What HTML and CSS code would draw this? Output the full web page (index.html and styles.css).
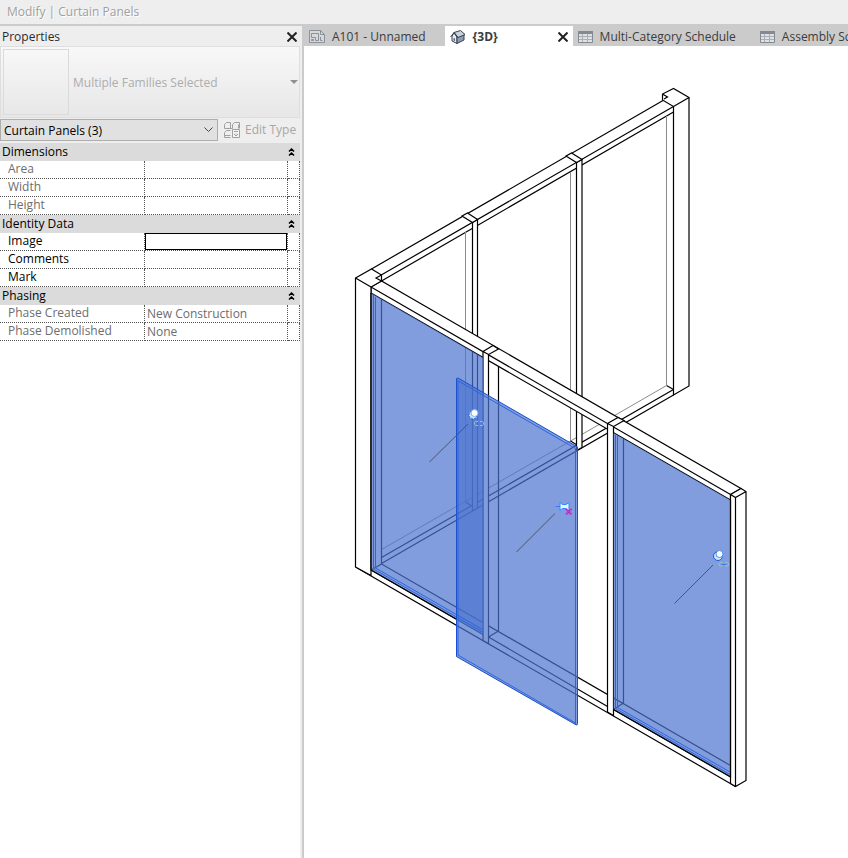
FILE: index.html
```html
<!DOCTYPE html>
<html lang="en">
<head>
    <meta charset="UTF-8">
    <meta name="viewport" content="width=device-width, initial-scale=1.0">
    <title>Modify | Curtain Panels</title>
    <link rel="stylesheet" href="styles.css">
</head>
<body>
<header class="options-bar">Modify | Curtain Panels</header>

<div class="workspace">
    <!-- Properties palette -->
    <aside class="palette">
        <div class="palette-title">
            <h1>Properties</h1>
            <button class="close" aria-label="Close properties">
                <svg width="10" height="10" viewBox="0 0 10 10"><path d="M0.5 0.5L9.5 9.5M9.5 0.5L0.5 9.5"/></svg>
            </button>
        </div>

        <button class="type-selector" disabled>
            <span class="type-preview"></span>
            <span class="type-name">Multiple Families Selected</span>
            <svg width="8" height="4" viewBox="0 0 8 4"><path d="M0 0H8L4 4Z" fill="#909090"/></svg>
        </button>

        <div class="filter-row">
            <select class="filter" aria-label="Properties filter">
                <option>Curtain Panels (3)</option>
            </select>
            <button class="edit-type" disabled>
                <svg width="16" height="16" viewBox="0 0 16 16" fill="none" stroke="#a0a0a0">
                    <path d="M6.5 6.5H0.5V2.5L2.5 0.5H6.5ZM8.5 6.5V2.5L10.5 0.5H15.5V6.5M14.5 2.5V6.5M8.5 6.5H4.5M6.5 15.5H0.5V10.5L2.5 8.5H6.5M0.5 13.5H6.5"/>
                    <path d="M8.5 7.5H15.5V15.5H8.5Z" fill="#f4f4f4"/>
                    <path d="M10 9.5H14M10 12.5H11M13 12.5H14M11 13.5H13M12 11.5V12.5"/>
                </svg>
                <span>Edit Type</span>
            </button>
        </div>

        <table class="properties">
            <colgroup>
                <col class="col-name">
                <col class="col-value">
                <col class="col-link">
            </colgroup>
            <tbody>
                <tr class="group">
                    <th colspan="3"><div>Dimensions
                        <button aria-label="Collapse Dimensions"><svg width="7" height="8" viewBox="0 0 7 8"><path d="M1 3.5L3.5 1L6 3.5M1 7.5L3.5 5L6 7.5"/></svg></button></div></th>
                </tr>
                <tr class="readonly">
                    <td><label for="area">Area</label></td>
                    <td><input id="area" type="text" disabled></td>
                    <td></td>
                </tr>
                <tr class="readonly">
                    <td><label for="width">Width</label></td>
                    <td><input id="width" type="text" disabled></td>
                    <td></td>
                </tr>
                <tr class="readonly">
                    <td><label for="height">Height</label></td>
                    <td><input id="height" type="text" disabled></td>
                    <td></td>
                </tr>
            </tbody>
            <tbody>
                <tr class="group">
                    <th colspan="3"><div>Identity Data
                        <button aria-label="Collapse Identity Data"><svg width="7" height="8" viewBox="0 0 7 8"><path d="M1 3.5L3.5 1L6 3.5M1 7.5L3.5 5L6 7.5"/></svg></button></div></th>
                </tr>
                <tr>
                    <td><label for="image">Image</label></td>
                    <td><input id="image" class="current" type="text"></td>
                    <td></td>
                </tr>
                <tr>
                    <td><label for="comments">Comments</label></td>
                    <td><input id="comments" type="text"></td>
                    <td></td>
                </tr>
                <tr>
                    <td><label for="mark">Mark</label></td>
                    <td><input id="mark" type="text"></td>
                    <td></td>
                </tr>
            </tbody>
            <tbody>
                <tr class="group">
                    <th colspan="3"><div>Phasing
                        <button aria-label="Collapse Phasing"><svg width="7" height="8" viewBox="0 0 7 8"><path d="M1 3.5L3.5 1L6 3.5M1 7.5L3.5 5L6 7.5"/></svg></button></div></th>
                </tr>
                <tr class="readonly">
                    <td><label for="created">Phase Created</label></td>
                    <td><input id="created" type="text" value="New Construction" disabled></td>
                    <td></td>
                </tr>
                <tr class="readonly">
                    <td><label for="demolished">Phase Demolished</label></td>
                    <td><input id="demolished" type="text" value="None" disabled></td>
                    <td></td>
                </tr>
            </tbody>
        </table>
    </aside>

    <!-- Open views -->
    <main class="views">
        <nav class="tabs">
            <a class="tab" href="#a101">
                <svg width="16" height="13" viewBox="0 0 16 13" fill="none" stroke="#8b9198">
                    <path d="M0.5 0.5H11.5L15.5 4.5V12.5H0.5Z" fill="#d6d8da"/>
                    <path d="M11.5 0.5V4.5H15.5M2.5 3.5H9.5V10.5H6.5V7.5H2.5ZM2.5 10.5H4.5V9.5H2.5ZM11.5 7V10.5H13.5"/>
                </svg>
                <span>A101 - Unnamed</span>
            </a>
            <a class="tab active" href="#3d">
                <svg width="16" height="14" viewBox="0 0 16 14">
                    <path d="M2 6V11L7 13.500V7L4 3Z" fill="#e6ebf2" stroke="#39414d"/>
                    <path d="M7 7L14 4V10L7 13.500Z" fill="#8d9cb0" stroke="#39414d"/>
                    <path d="M4 2.500L10.500 0.500L15 4.500L8 7.500Z" fill="#c9d1dc" stroke="#39414d"/>
                    <path d="M0.500 7L4 2.500L8 7.500" fill="none" stroke="#39414d"/>
                    <path d="M3.500 8V10.500L5 11.200V8.500Z" fill="#5a6879"/>
                </svg>
                <span>{3D}</span>
                <button class="close" aria-label="Close view">
                    <svg width="10" height="10" viewBox="0 0 10 10"><path d="M0.5 0.5L9.5 9.5M9.5 0.5L0.5 9.5"/></svg>
                </button>
            </a>
            <a class="tab" href="#multi-category">
                <svg width="15" height="12" viewBox="0 0 15 12">
                    <path d="M0.5 0.5H14.5V11.5H0.5Z" fill="#dfe1e3" stroke="#858a92"/>
                    <path d="M0 0H15V3H0Z" fill="#858a92"/>
                    <path d="M1 5.5H14M1 8.5H14M4.500 3V11M9.500 3V11" stroke="#abb0b6"/>
                </svg>
                <span>Multi-Category Schedule</span>
            </a>
            <a class="tab" href="#assembly">
                <svg width="15" height="12" viewBox="0 0 15 12">
                    <path d="M0.5 0.5H14.5V11.5H0.5Z" fill="#dfe1e3" stroke="#858a92"/>
                    <path d="M0 0H15V3H0Z" fill="#858a92"/>
                    <path d="M1 5.5H14M1 8.5H14M4.500 3V11M9.500 3V11" stroke="#abb0b6"/>
                </svg>
                <span>Assembly Schedule</span>
            </a>
        </nav>

        <div class="canvas">
            <svg class="model" width="544" height="812" viewBox="304 46 544 812" role="img" aria-label="Curtain wall, 3D view">
                <!-- back wall -->
                <g class="edge">
                    <path d="M371.500 269L663 100.500M376 278L673.500 106.500M381.500 281L673.500 112"/>
                    <path d="M673.500 106.500L689 97.500L673.500 88.500L662.500 94V100L673.500 106.500V395L689 386V97.500M662.500 94L667.500 97L664 99"/>
                    <path d="M673.500 389.500L381.500 557.500M673.500 395L381.500 563.500M666.500 385.500L673.500 389.500"/>
                    <path class="far" d="M666.500 116V385.500L570.500 441M570.500 441L381.500 549.500M570.500 172V441M465.500 232V502"/>
                    <path d="M570.500 441L577 445M465.500 502L472 506"/>
                    <path class="solid" d="M472.500 222.500L477.500 219.500V508L472.500 511Z"/>
                    <path class="solid" d="M576.500 162.500L582 159.500V447.500L576.500 450.500Z"/>
                    <path class="solid" d="M462 216L467.500 213L477.500 219.500L472.500 222.500Z"/>
                    <path class="solid" d="M566 156L571.500 153L582 159.500L576.500 162.500Z"/>
                </g>
                <!-- front wall -->
                <g class="edge">
                    <path d="M381.500 299V564L730.500 765.500M371 570L381.500 564M498.500 366V631L488.500 637L607.500 706.500M623.500 439V703L613.500 709.500"/>
                    <path class="solid" d="M371 287L381.500 281L741 488.500L730.500 494.500V500L371 293Z"/>
                    <path d="M371 287L730.500 494.500"/>
                    <path d="M371 570L483 634.500M613.500 709.500L731 777M355.500 567L735.500 786.500"/>
                    <path class="solid" d="M355.500 278L371.500 269L381.500 275V281L371 287V575.500L355.500 567Z"/>
                    <path d="M355.500 278L371 287M381.500 275L376 278L381.500 281"/>
                    <path class="solid" d="M483 351.500L493 345.500L498.500 349L488.500 354.500V643.500L483 640.500ZM483 351.500L488.500 354.500"/>
                    <path class="solid" d="M607.500 423.500L618 417.500L624 420.500L613.500 426.500V715.500L607.500 712ZM607.500 423.500L613.500 426.500"/>
                    <path class="solid" d="M730.500 494.500L741 488.500L746 491.500V780.500L735.500 786.500L730.500 783.500ZM730.500 494.500L735.500 497.500L746 491.500M735.500 497.500V786.500"/>
                </g>
                <!-- selected panels -->
                <g class="panel">
                    <path d="M371 293L483 357.500V634.500L371 570Z"/>
                    <path d="M613.500 433L730.500 500V777L613.500 709.500Z"/>
                    <path d="M456 378.500L458 378L578 447V724.500L576.500 725.500L456 656.500Z"/>
                </g>
                <g class="panel-edge">
                    <path d="M373.500 295V569L482.500 632M375.500 297V568L482.500 629.500"/>
                    <path d="M615.500 435V708.500L730 774.500M617.500 436V707.500L730 772"/>
                    <path class="outline" d="M456.500 378.500L458 378L577.500 447V724L576.500 725L456.500 656.500Z"/>
                    <path d="M457.500 380.500L575.500 448.500V724M458 381V655L575.500 723"/>
                </g>
                <g class="edge">
                    <path d="M371 293V570L456 619M730.500 500V777L613.500 709.500"/>
                </g>
                <!-- pins -->
                <path class="leader" d="M429.500 462L468 424M516.500 552L555 513.500M674.500 603.500L713 565"/>
                <g id="pin-left">
                    <circle cx="473" cy="415" r="4" fill="#c9e6f8" stroke="#2458d8" stroke-dasharray="2 1"/>
                    <circle cx="474.500" cy="413" r="3.500" fill="#fff" stroke="#77b5f5"/>
                    <path d="M478 421.500H475.500L474.500 422.500V424.500L475.500 425.500H478M480 421.500H482.500L483.500 422.500V424.500L482.500 425.500H480" fill="none" stroke="#9cc0c8"/>
                </g>
                <g id="pin-middle">
                    <path d="M555.500 506.500H560" stroke="#3a78f0"/>
                    <path d="M560 502.500L562.500 504.500H566L569 502.500V511.500L566 508.500H562.500L560 510.500Z" fill="#d9fbff" stroke="#3a84f5"/>
                    <path d="M566 509L571.500 514.500M571.500 509L566 514.500" stroke="#c21fc4" stroke-width="2" stroke-dasharray="1.500 .5"/>
                </g>
                <g id="pin-right">
                    <circle cx="718" cy="556" r="4.500" fill="#c9e6f8" stroke="#2458d8"/>
                    <circle cx="719.500" cy="554" r="3.500" fill="#fff" stroke="#4a90f5"/>
                    <path d="M722.500 562.500H720L719 563.500V565L720 566H722.500M725 562.500H727.500L728.500 563.500V565L727.500 566H725" fill="none" stroke="#9cc0c8"/>
                    <path d="M721.500 564.500H726.500" stroke="#3f7cf0"/>
                </g>
            </svg>
        </div>
    </main>
</div>
</body>
</html>
```

FILE: styles.css
```css
* {
    box-sizing: border-box;
}

body {
    margin: 0;
    height: 100vh;
    display: flex;
    flex-direction: column;
    overflow: hidden;
    background-color: #eeeeee;
    color: #000;
    font-family: "Open Sans", "Noto Sans", sans-serif;
    font-size: 12px;
    line-height: 16px;
}

button,
input,
select {
    font: inherit;
    color: inherit;
    margin: 0;
    padding: 0;
    border: 0;
    border-radius: 0;
    background: none;
}

svg {
    display: block;
    flex: none;
}

.options-bar {
    flex: none;
    height: 24px;
    padding: 4px 7px;
    color: #a0a0a0;
    text-shadow: 1px 1px 0 #fff;
}

.workspace {
    flex: 1;
    display: flex;
    min-height: 0;
    border-top: 2px solid #cbcbcb;
}

/* Properties palette */
.palette {
    flex: none;
    width: 304px;
    display: flex;
    flex-direction: column;
    padding-right: 2px;
    border-right: 2px solid #cbcbcb;
}

.palette-title {
    height: 20px;
    display: flex;
    align-items: center;
    justify-content: space-between;
    padding: 2px 3px 0 2px;
    color: #2b2b2b;
}

.palette-title h1 {
    margin: 0;
    font-size: 12px;
    font-weight: normal;
}

.close path {
    fill: none;
    stroke: #222;
    stroke-width: 2;
}

.type-selector {
    height: 72px;
    display: flex;
    align-items: center;
    gap: 4px;
    padding: 0 1px 0 2px;
    border: 1px solid #dedede;
    background: linear-gradient(#f8f8f8, #e7e7e7);
    color: #adadad;
    text-align: left;
}

.type-preview {
    width: 66px;
    height: 66px;
    border: 1px solid #dadada;
}

.type-name {
    flex: 1;
    padding-top: 2px;
}

.filter-row {
    display: flex;
    align-items: center;
    gap: 6px;
    padding: 1px 0 2px;
}

.filter {
    appearance: none;
    width: 218px;
    height: 22px;
    padding: 1px 3px 0;
    border: 1px solid #adadad;
    background: #e1e1e1 url("data:image/svg+xml,%3Csvg xmlns='http://www.w3.org/2000/svg' width='9' height='6'%3E%3Cpath d='M.5 .5L4.5 4.5L8.5 .5' fill='none' stroke='%23444'/%3E%3C/svg%3E") no-repeat right 4px center;
}

.edit-type {
    display: flex;
    align-items: center;
    gap: 5px;
    color: #a6a6a6;
    white-space: nowrap;
}

.palette::after {
    content: "";
    flex: 1;
    background-color: #fff;
}

.properties {
    table-layout: fixed;
    width: 300px;
    border-spacing: 0;
    background-color: #fff;
}

.col-name {
    width: 145px;
}

.col-value {
    width: 143px;
}

.col-link {
    width: 12px;
}

.properties th {
    height: 18px;
    padding: 0 5px 0 2px;
    background-color: #dbdbdb;
    font-weight: normal;
    text-align: left;
}

.properties th div {
    display: flex;
    align-items: center;
    justify-content: space-between;
}

.properties th path {
    fill: none;
    stroke: #000;
    stroke-width: 1.5;
}

.properties td {
    height: 18px;
    padding: 0;
    border-right: 1px dotted #555;
    border-bottom: 1px dotted #555;
}

.properties td:first-child {
    padding-left: 8px;
}

.properties label,
.properties input {
    display: block;
    width: 100%;
    height: 17px;
    white-space: nowrap;
}

.properties input {
    padding: 0 2px 1px;
}

.properties .readonly {
    color: #6d6d6d;
}

.properties .current {
    border: 1px solid #000;
}

/* Views */
.views {
    flex: 1;
    display: flex;
    flex-direction: column;
    min-width: 0;
    overflow: hidden;
}

.tabs {
    flex: none;
    display: flex;
    height: 20px;
    background-color: #cbcbcb;
}

.tab {
    flex: none;
    display: flex;
    align-items: center;
    gap: 7px;
    padding: 1px 19px 0 5px;
    color: #3c3c3c;
    text-decoration: none;
    white-space: nowrap;
}

.tab.active {
    min-width: 128px;
    padding-right: 5px;
    background-color: #fff;
    font-weight: bold;
}

.tab .close {
    margin-left: auto;
}

.canvas {
    flex: 1;
    overflow: hidden;
    background-color: #fff;
}

/* Model lines */
.edge path {
    fill: none;
    stroke: #000;
    stroke-width: 1.2;
}

.edge .solid {
    fill: #fff;
}

.edge .far {
    stroke: #8c8c8c;
    stroke-width: 1;
}

.panel path {
    fill: rgba(75, 116, 208, 0.7);
}

.panel-edge path {
    fill: none;
    stroke: #2f65d8;
    stroke-width: 1;
}

.panel-edge .outline {
    stroke: #1c50cc;
}

.leader {
    stroke: #555;
    stroke-width: 1;
}
```
